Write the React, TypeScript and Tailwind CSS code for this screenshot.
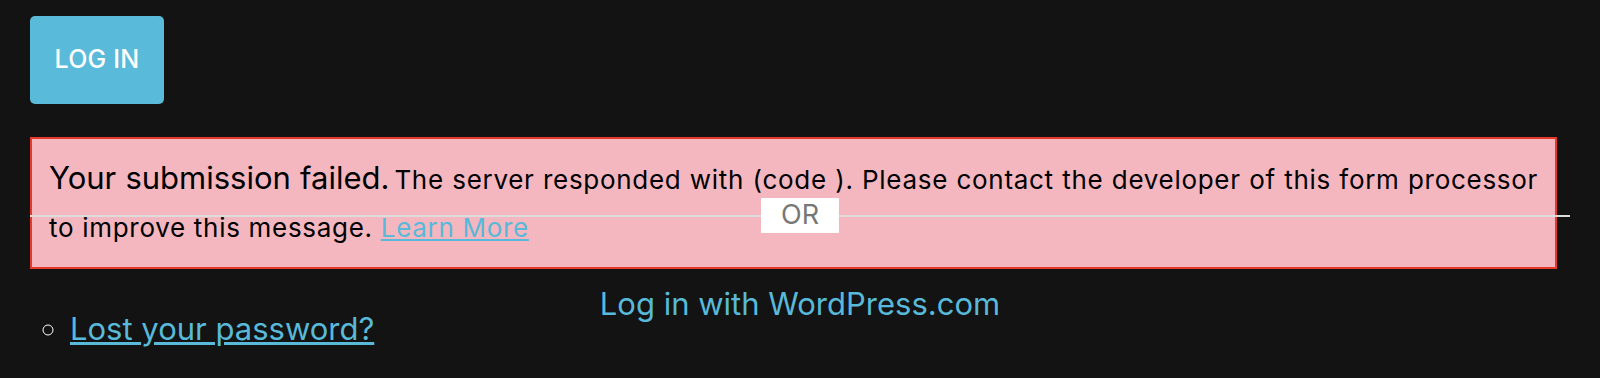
export default function App() {
  return (
    <div className="relative min-h-screen bg-[#131313] px-[30px] pt-[16px] font-['Inter','Liberation_Sans',sans-serif]">
      <button className="h-[88px] w-[134px] rounded-[5px] bg-[#5abad9] text-[25px] font-medium tracking-[0.2px] text-white">
        LOG IN
      </button>

      {/* error notice sits over the divider area */}
      <div className="absolute left-[30px] right-[43px] top-[137px] z-0 border-2 border-[#e5392b] bg-[#f4b7bf] px-[17px] pb-[12px] pt-[20px] text-justify leading-[48px] text-black">
        <span className="text-[31px] leading-none">Your submission failed.</span>{' '}
        <span className="text-[26px] leading-none tracking-[0.7px]">
          The server responded with (code ). Please contact the developer of this form processor to improve this
          message.{' '}
          <a href="#" className="text-[#58b9d8] underline">
            Learn More
          </a>
        </span>
      </div>

      <div className="relative z-10 mt-[94px] flex justify-center">
        <div className="absolute inset-x-0 top-[17px] h-[2px] bg-[#dcdcdc]" />
        <span className="relative flex h-[35px] w-[78px] items-center justify-center bg-white text-[27px] text-[#777]">
          OR
        </span>
      </div>

      <div className="grid">
        <a href="#" className="col-start-1 row-start-1 mt-[49px] justify-self-center text-[31px] leading-[44px] text-[#58b9d8]">
          Log in with WordPress.com
        </a>
        <ul className="col-start-1 row-start-1 mt-[74px] list-[circle] pl-10 text-[31px] leading-[44px] text-white">
          <li>
            <a href="#" className="text-[#58b9d8] underline">
              Lost your password?
            </a>
          </li>
        </ul>
      </div>
    </div>
  )
}
